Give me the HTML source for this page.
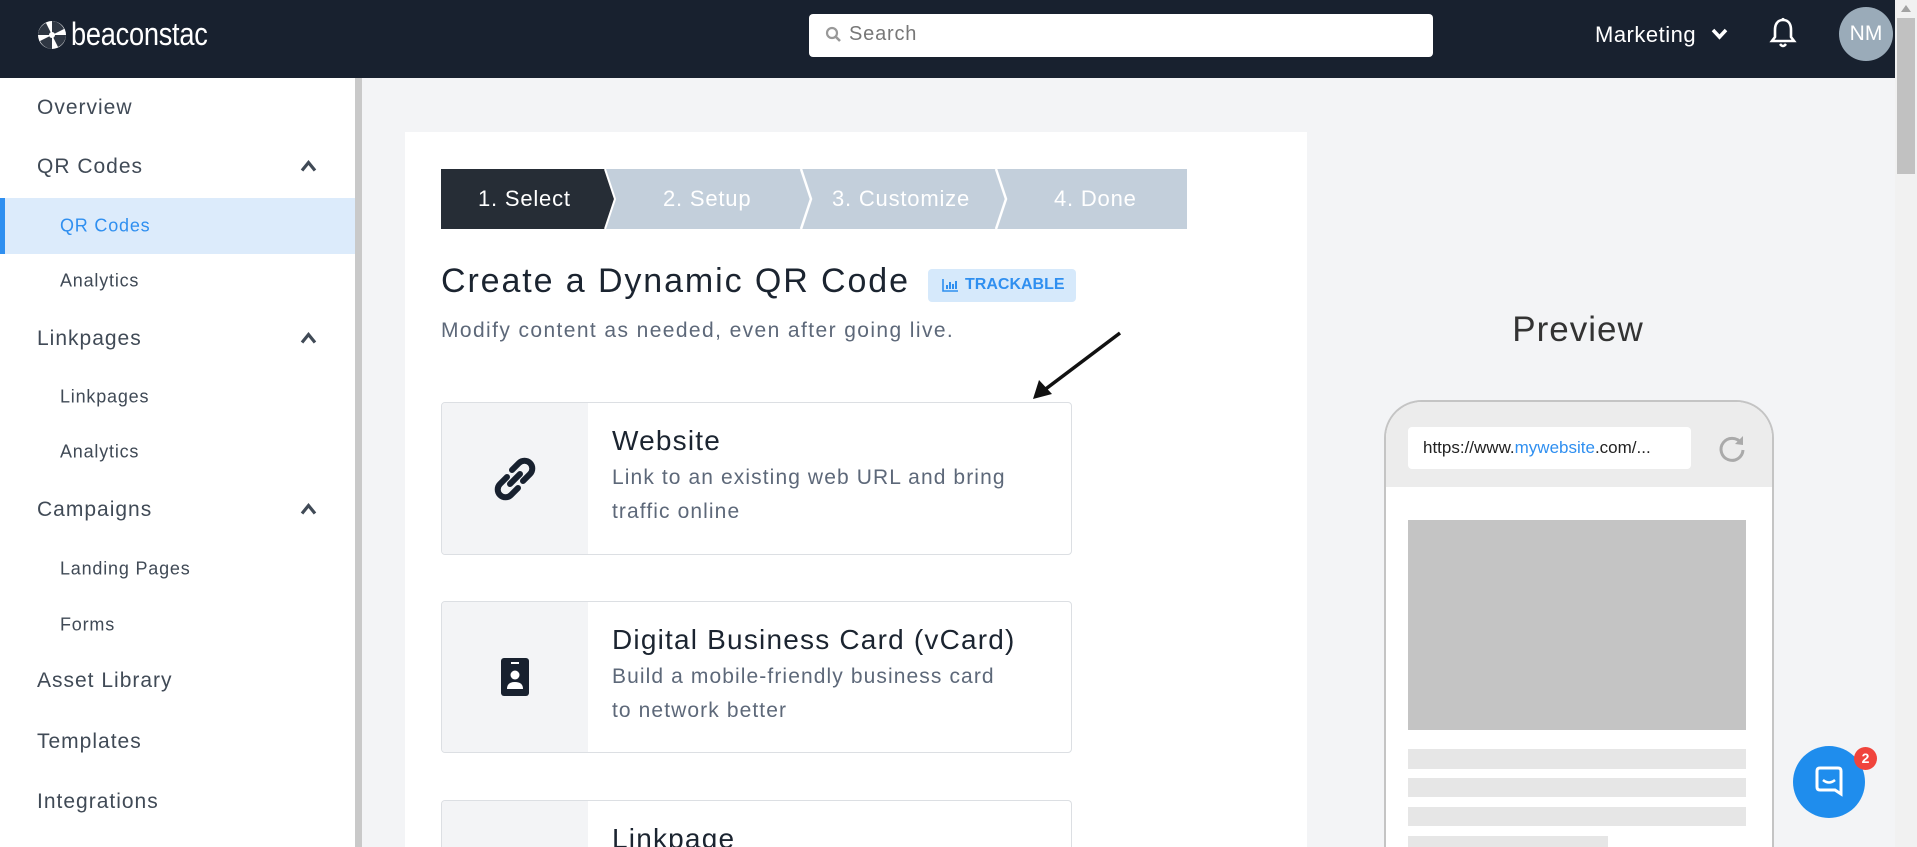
<!DOCTYPE html>
<html><head><meta charset="utf-8"><style>
*{box-sizing:border-box;margin:0;padding:0}
html,body{width:1917px;height:847px;overflow:hidden}
body{position:relative;background:#f3f4f6;font-family:"Liberation Sans",sans-serif}
#w{position:absolute;left:0;top:0;width:1917px;height:847px;overflow:hidden}
.a{position:absolute}
.hdr{left:0;top:0;width:1895px;height:78px;background:#18212f}
.sb{left:0;top:78px;width:355px;height:769px;background:#fff}
.sbb{left:355px;top:78px;width:7px;height:769px;background:#c9c9c9}
.it{position:absolute;left:37px;font-size:21px;color:#404a56;transform:translateY(-50%);letter-spacing:1px}
.sub{left:60px;font-size:18px;letter-spacing:.8px}
.chev{position:absolute;left:300px;transform:translateY(-50%)}
.step{position:absolute;top:169px;height:60px;color:#fff;font-size:22px;line-height:60px;letter-spacing:.8px}
.card{position:absolute;left:441px;width:631px;background:#fff;border:1px solid #dcdfe3;border-radius:4px;overflow:hidden}
.card .ic{position:absolute;left:0;top:0;bottom:0;width:146px;background:#f3f4f6;display:flex;align-items:center;justify-content:center}
.card h3{position:absolute;left:170px;top:22px;font-weight:normal;font-size:28px;color:#1b2430;letter-spacing:1.2px;white-space:nowrap}
.card p{position:absolute;left:170px;top:58px;font-size:21px;line-height:34px;color:#5d6879;white-space:nowrap;letter-spacing:1.1px}
.ln{position:absolute;left:1408px;width:338px;background:#e6e6e6}
</style></head><body><div id="w">
<div class="a hdr"></div>
<svg class="a" style="left:37px;top:20px" width="30" height="30" viewBox="0 0 30 30"><circle cx="15" cy="15" r="14" fill="#fff"/><path d="M15 15 L15 1 A14 14 0 0 1 27 9Z M15 15 L29 15 A14 14 0 0 1 21 27Z M15 15 L15 29 A14 14 0 0 1 3 21Z M15 15 L1 15 A14 14 0 0 1 9 3Z" fill="#18212f" opacity=".9"/><circle cx="15" cy="15" r="3" fill="#fff"/></svg>
<div class="a" style="left:71px;top:16px;font-size:32px;color:#fff;letter-spacing:-.3px;transform:scaleX(.85);transform-origin:left">beaconstac</div>
<div class="a" style="left:809px;top:14px;width:624px;height:43px;background:#fff;border-radius:4px"></div>
<svg class="a" style="left:825px;top:26px" width="17" height="17" viewBox="0 0 17 17"><circle cx="7" cy="7" r="5" stroke="#999" stroke-width="2.2" fill="none"/><path d="M10.5 10.5 L15 15" stroke="#999" stroke-width="2.6"/></svg>
<div class="a" style="left:849px;top:23px;font-size:20px;color:#777;letter-spacing:.8px">Search</div>
<div class="a" style="left:1595px;top:22px;font-size:22px;color:#fff;letter-spacing:.5px">Marketing</div>
<svg class="a" style="left:1711px;top:28px" width="17" height="13" viewBox="0 0 17 13"><path d="M2 2 L8.5 9 L15 2" stroke="#fff" stroke-width="3.5" fill="none"/></svg>
<svg class="a" style="left:1768px;top:17px" width="30" height="32" viewBox="0 0 30 32"><path d="M15 3 C9 3 7 8 7 13 L7 20 L4 24 L26 24 L23 20 L23 13 C23 8 21 3 15 3Z" stroke="#fff" stroke-width="2.6" fill="none"/><path d="M12 27 Q15 31 18 27" stroke="#fff" stroke-width="2.5" fill="none"/><circle cx="15" cy="2.5" r="1.6" fill="#fff"/></svg>
<div class="a" style="left:1839px;top:7px;width:54px;height:54px;border-radius:50%;background:#9aabb9;color:#fff;font-size:21px;text-align:center;line-height:54px">NM</div>
<div class="a" style="left:1895px;top:0;width:22px;height:847px;background:#f1f1f1"></div>
<div class="a" style="left:1897px;top:18px;width:18px;height:156px;background:#c1c1c1"></div>
<svg class="a" style="left:1901px;top:4px" width="10" height="8"><path d="M0 8 L5 1 L10 8Z" fill="#a3a3a3"/></svg>

<div class="a sb"></div><div class="a sbb"></div>
<div class="a" style="left:0;top:198px;width:355px;height:56px;background:#dcebfb"></div>
<div class="a" style="left:0;top:198px;width:5px;height:56px;background:#2f8ff0"></div>
<div class="it" style="top:108px">Overview</div>
<div class="it" style="top:167px">QR Codes</div>
<div class="it sub" style="top:226px;color:#2f8ff0">QR Codes</div>
<div class="it sub" style="top:281px">Analytics</div>
<div class="it" style="top:339px">Linkpages</div>
<div class="it sub" style="top:397px">Linkpages</div>
<div class="it sub" style="top:452px">Analytics</div>
<div class="it" style="top:510px">Campaigns</div>
<div class="it sub" style="top:569px">Landing Pages</div>
<div class="it sub" style="top:625px">Forms</div>
<div class="it" style="top:681px">Asset Library</div>
<div class="it" style="top:742px">Templates</div>
<div class="it" style="top:802px">Integrations</div>
<svg class="chev" style="top:166px" width="17" height="13"><path d="M2 11 L8.5 3 L15 11" stroke="#404a56" stroke-width="3.2" fill="none"/></svg>
<svg class="chev" style="top:338px" width="17" height="13"><path d="M2 11 L8.5 3 L15 11" stroke="#404a56" stroke-width="3.2" fill="none"/></svg>
<svg class="chev" style="top:509px" width="17" height="13"><path d="M2 11 L8.5 3 L15 11" stroke="#404a56" stroke-width="3.2" fill="none"/></svg>

<div class="a" style="left:405px;top:132px;width:902px;height:715px;background:#fff"></div>
<svg class="a" style="left:441px;top:169px" width="746" height="60" viewBox="0 0 746 60">
<rect width="746" height="60" fill="#c3cfdb"/>
<path d="M0 0 L164 0 L174 30 L164 60 L0 60Z" fill="#262d36"/>
<path d="M164 0 L174 30 L164 60" stroke="#fff" stroke-width="2" fill="none"/>
<path d="M360 0 L370 30 L360 60" stroke="#fff" stroke-width="2.5" fill="none"/>
<path d="M555 0 L565 30 L555 60" stroke="#fff" stroke-width="2.5" fill="none"/>
</svg>
<div class="step" style="left:478px">1. Select</div>
<div class="step" style="left:663px">2. Setup</div>
<div class="step" style="left:832px">3. Customize</div>
<div class="step" style="left:1054px">4. Done</div>
<div class="a" style="left:441px;top:262px;font-size:34px;color:#1b2430;letter-spacing:1.9px">Create a Dynamic QR Code</div>
<div class="a" style="left:928px;top:269px;width:148px;height:33px;background:#d6e9fb;border-radius:4px"></div>
<svg class="a" style="left:942px;top:278px" width="17" height="14"><path d="M1 1 V13 H16" stroke="#2f8ff0" stroke-width="1.6" fill="none"/><path d="M5 11 V7 M8 11 V4 M11 11 V6 M14 11 V3" stroke="#2f8ff0" stroke-width="2"/></svg>
<div class="a" style="left:965px;top:276px;font-size:16px;font-weight:bold;color:#2f8ff0">TRACKABLE</div>
<div class="a" style="left:441px;top:319px;font-size:21px;color:#5d6879;letter-spacing:1.4px">Modify content as needed, even after going live.</div>
<svg class="a" style="left:1025px;top:328px" width="100" height="76"><path d="M95 5 L18 63" stroke="#111" stroke-width="3.5"/><path d="M8 71 L14 52 L27 66Z" fill="#111"/></svg>

<div class="card" style="top:402px;height:153px"><div class="ic">
<svg width="46" height="46" viewBox="0 0 46 46"><g fill="none" stroke="#18212f" stroke-width="6" stroke-linecap="round"><path d="M20 14 L27 7 A7 7 0 0 1 38 18 L31 25"/><path d="M26 32 L19 39 A7 7 0 0 1 8 28 L15 21"/><path d="M18 28 L28 18"/></g></svg></div>
<h3>Website</h3><p>Link to an existing web URL and bring<br>traffic online</p></div>
<div class="card" style="top:601px;height:152px"><div class="ic">
<svg width="30" height="40" viewBox="0 0 30 40"><rect x="1" y="1" width="28" height="38" rx="3" fill="#18212f"/><rect x="11" y="5" width="8" height="2" fill="#fff"/><circle cx="15" cy="18" r="4.5" fill="#fff"/><path d="M7 32 Q7 25 15 25 Q23 25 23 32Z" fill="#fff"/></svg></div>
<h3>Digital Business Card (vCard)</h3><p>Build a mobile-friendly business card<br>to network better</p></div>
<div class="card" style="top:800px;height:47px;border-bottom:none;border-radius:4px 4px 0 0"><div class="ic"></div><h3>Linkpage</h3></div>

<div class="a" style="left:1378px;top:310px;width:400px;text-align:center;font-size:35px;color:#333;letter-spacing:1px">Preview</div>
<div class="a" style="left:1384px;top:400px;width:390px;height:447px;border:2px solid #c4c4c4;border-bottom:none;border-radius:38px 38px 0 0;background:#fff;overflow:hidden"><div style="height:85px;background:#ececec"></div></div>
<div class="a" style="left:1408px;top:427px;width:283px;height:42px;background:#fff;border-radius:4px;font-size:17px;line-height:42px;padding-left:15px;color:#222">https://www.<span style="color:#2f8ff0">mywebsite</span>.com/...</div>
<svg class="a" style="left:1716px;top:433px" width="32" height="32" viewBox="0 0 32 32"><path d="M25 10 A11 11 0 1 0 27 17" stroke="#aaa" stroke-width="3" fill="none"/><path d="M27 3 L27 12 L19 11Z" fill="#aaa"/></svg>
<div class="a" style="left:1408px;top:520px;width:338px;height:210px;background:#c4c4c4"></div>
<div class="ln" style="top:749px;height:20px"></div>
<div class="ln" style="top:778px;height:19px"></div>
<div class="ln" style="top:807px;height:19px"></div>
<div class="ln" style="top:836px;height:11px;width:200px"></div>
<div class="a" style="left:1793px;top:746px;width:72px;height:72px;border-radius:50%;background:#1f8ded"></div>
<svg class="a" style="left:1813px;top:765px" width="32" height="32" viewBox="0 0 32 32"><path d="M4 6 Q4 3 7 3 L25 3 Q28 3 28 6 L28 29 L22 25 L7 25 Q4 25 4 22Z" stroke="#fff" stroke-width="3" fill="none"/><path d="M10 15 Q16 20 22 15" stroke="#fff" stroke-width="2.5" fill="none"/></svg>
<div class="a" style="left:1854px;top:747px;width:23px;height:23px;border-radius:50%;background:#f0443c;color:#fff;font-size:14px;font-weight:bold;text-align:center;line-height:23px">2</div>
</div></body></html>
